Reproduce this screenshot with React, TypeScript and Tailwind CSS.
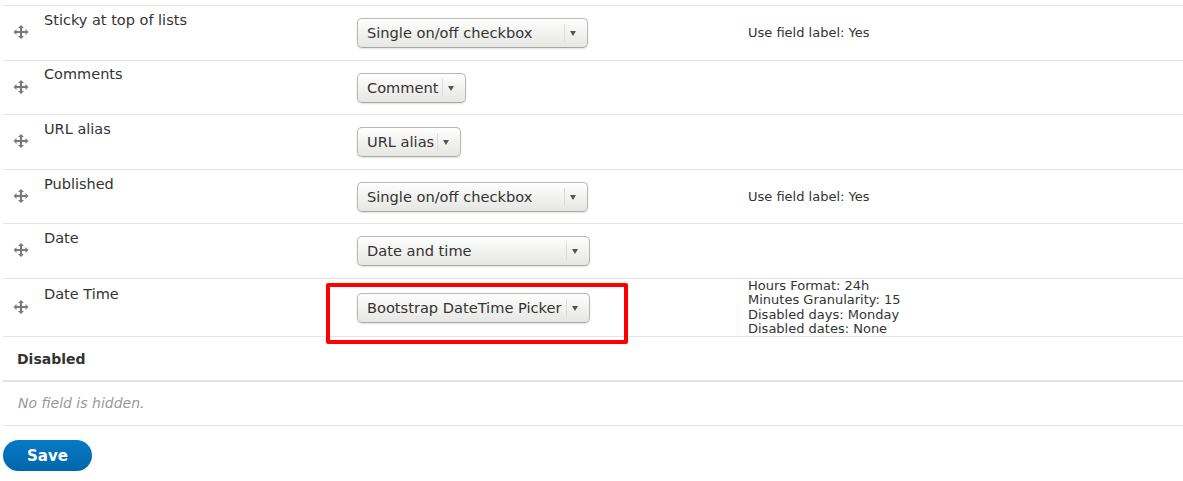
import React from "react";

type Row = { label: string; widget: string; width: string; summary?: string[]; height: string; labelPad: string };

const rows: Row[] = [
  { label: "Sticky at top of lists", widget: "Single on/off checkbox", width: "w-[231px]", summary: ["Use field label: Yes"], height: "h-[55px]", labelPad: "pt-[5px]" },
  { label: "Comments", widget: "Comment", width: "w-[109px]", height: "h-[54px]", labelPad: "pt-[4px]" },
  { label: "URL alias", widget: "URL alias", width: "w-[104px]", height: "h-[55px]", labelPad: "pt-[5px]" },
  { label: "Published", widget: "Single on/off checkbox", width: "w-[231px]", summary: ["Use field label: Yes"], height: "h-[54px]", labelPad: "pt-[5px]" },
  { label: "Date", widget: "Date and time", width: "w-[233px]", height: "h-[55px]", labelPad: "pt-[5px]" },
  {
    label: "Date Time",
    widget: "Bootstrap DateTime Picker",
    width: "w-[233px]",
    summary: ["Hours Format: 24h", "Minutes Granularity: 15", "Disabled days: Monday", "Disabled dates: None"],
    height: "h-[58px]",
    labelPad: "pt-[6px]",
  },
];

function DragHandle() {
  return (
    <svg width="16" height="14" viewBox="0 0 16 14" className="block">
      <path d="M8 2v10M2 7h12" stroke="#7a7a7a" strokeWidth="2.2" fill="none" />
      <path d="M8 0l3 3h-6zM8 14l3-3h-6zM0.5 7l3-3v6zM15.5 7l-3-3v6z" fill="#7a7a7a" />
    </svg>
  );
}

function FakeSelect({ text, width }: { text: string; width: string }) {
  return (
    <div className={`${width} h-[30px] flex items-center rounded-[5px] border border-[#b8b8b8] border-b-[#a8a8a8] bg-gradient-to-b from-[#fefefe] to-[#e6e6e3] pl-[9px] shadow-[0_1px_2px_rgba(0,0,0,0.12)]`}>
      <span className="flex-1 whitespace-nowrap pt-[0.5px] text-[14.6px] text-[#333333]">{text}</span>
      <span className="h-[18px] w-px bg-[#dcdcd8]" />
      <span className="flex w-[16px] justify-center pt-[1px]">
        <span className="h-0 w-0 border-x-[3px] border-t-[5px] border-x-transparent border-t-[#555555]" />
      </span>
      <span className="w-[6px]" />
    </div>
  );
}

export default function App() {
  return (
    <div className="relative h-[481px] w-[1183px] overflow-hidden bg-white pl-[3px] pt-[5px] font-['DejaVu_Sans',sans-serif] text-[#333333]">
      <div className="border-t border-[#e6e4df]">
        {rows.map((r) => (
          <div key={r.label} className={`${r.height} flex border-b border-[#e6e4df]`}>
            <div className="flex w-[41px] items-center pb-[2px] pl-[10px]">
              <DragHandle />
            </div>
            <div className={`${r.labelPad} w-[313px] text-[14.5px] leading-[18px]`}>{r.label}</div>
            <div className="flex w-[391px] items-center">
              <FakeSelect text={r.widget} width={r.width} />
            </div>
            <div className={`${r.summary && r.summary.length > 1 ? "leading-[14.4px]" : "leading-[14px]"} flex flex-col justify-center text-[13px]`}>
              {r.summary?.map((s) => <div key={s}>{s}</div>)}
            </div>
          </div>
        ))}
      </div>
      <div className="flex h-[45px] items-center border-b-2 border-[#e3e2dc] pl-[14px] pt-[2px] text-[14px] font-bold text-[#333333]">Disabled</div>
      <div className="flex h-[44px] items-center border-b border-[#e6e4df] pl-[15px] text-[14px] italic text-[#999999]">No field is hidden.</div>
      <button className="mt-[14px] block h-[31px] w-[89px] rounded-[20px] bg-gradient-to-b from-[#0a7ac4] to-[#0066ae] pt-[1px] text-[15px] font-bold text-white">Save</button>
      <div className="absolute left-[326px] top-[283px] h-[61px] w-[302px] rounded-[2px] border-4 border-[#ff0000]" />
    </div>
  );
}
